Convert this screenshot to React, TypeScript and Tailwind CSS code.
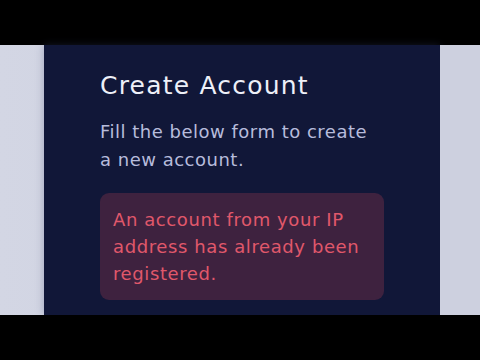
export default function App() {
  return (
    <div className="w-[480px] h-[360px] bg-black flex flex-col overflow-hidden" style={{ fontFamily: '"DejaVu Sans", sans-serif' }}>
      <div className="h-[45px] shrink-0 bg-black" />
      <div className="h-[270px] shrink-0 flex bg-gradient-to-r from-[#d3d6e4] to-[#c9cddd]">
        <div className="w-[44px] shrink-0" />
        <div className="w-[396px] shrink-0 bg-[#111738] pl-[56px] pt-[26px] shadow-[0_0_8px_rgba(60,70,110,0.35)]">
          <h1 className="text-[25px] leading-[30px] text-[#eef0f8] tracking-[1.2px]">Create Account</h1>
          <p className="mt-[17px] text-[18px] leading-[28px] text-[#b7bcdc] tracking-[0.5px] w-[275px]">
            Fill the below form to create a new account.
          </p>
          <div className="mt-[19px] w-[284px] h-[107px] rounded-[9px] bg-[#3e223f] px-[13px] pt-[13px]">
            <p className="text-[18px] leading-[27px] text-[#e0586b] tracking-[0.6px]">
              An account from your IP address has already been registered.
            </p>
          </div>
        </div>
        <div className="flex-1 bg-[#cdd0df]" />
      </div>
      <div className="flex-1 bg-black" />
    </div>
  );
}
